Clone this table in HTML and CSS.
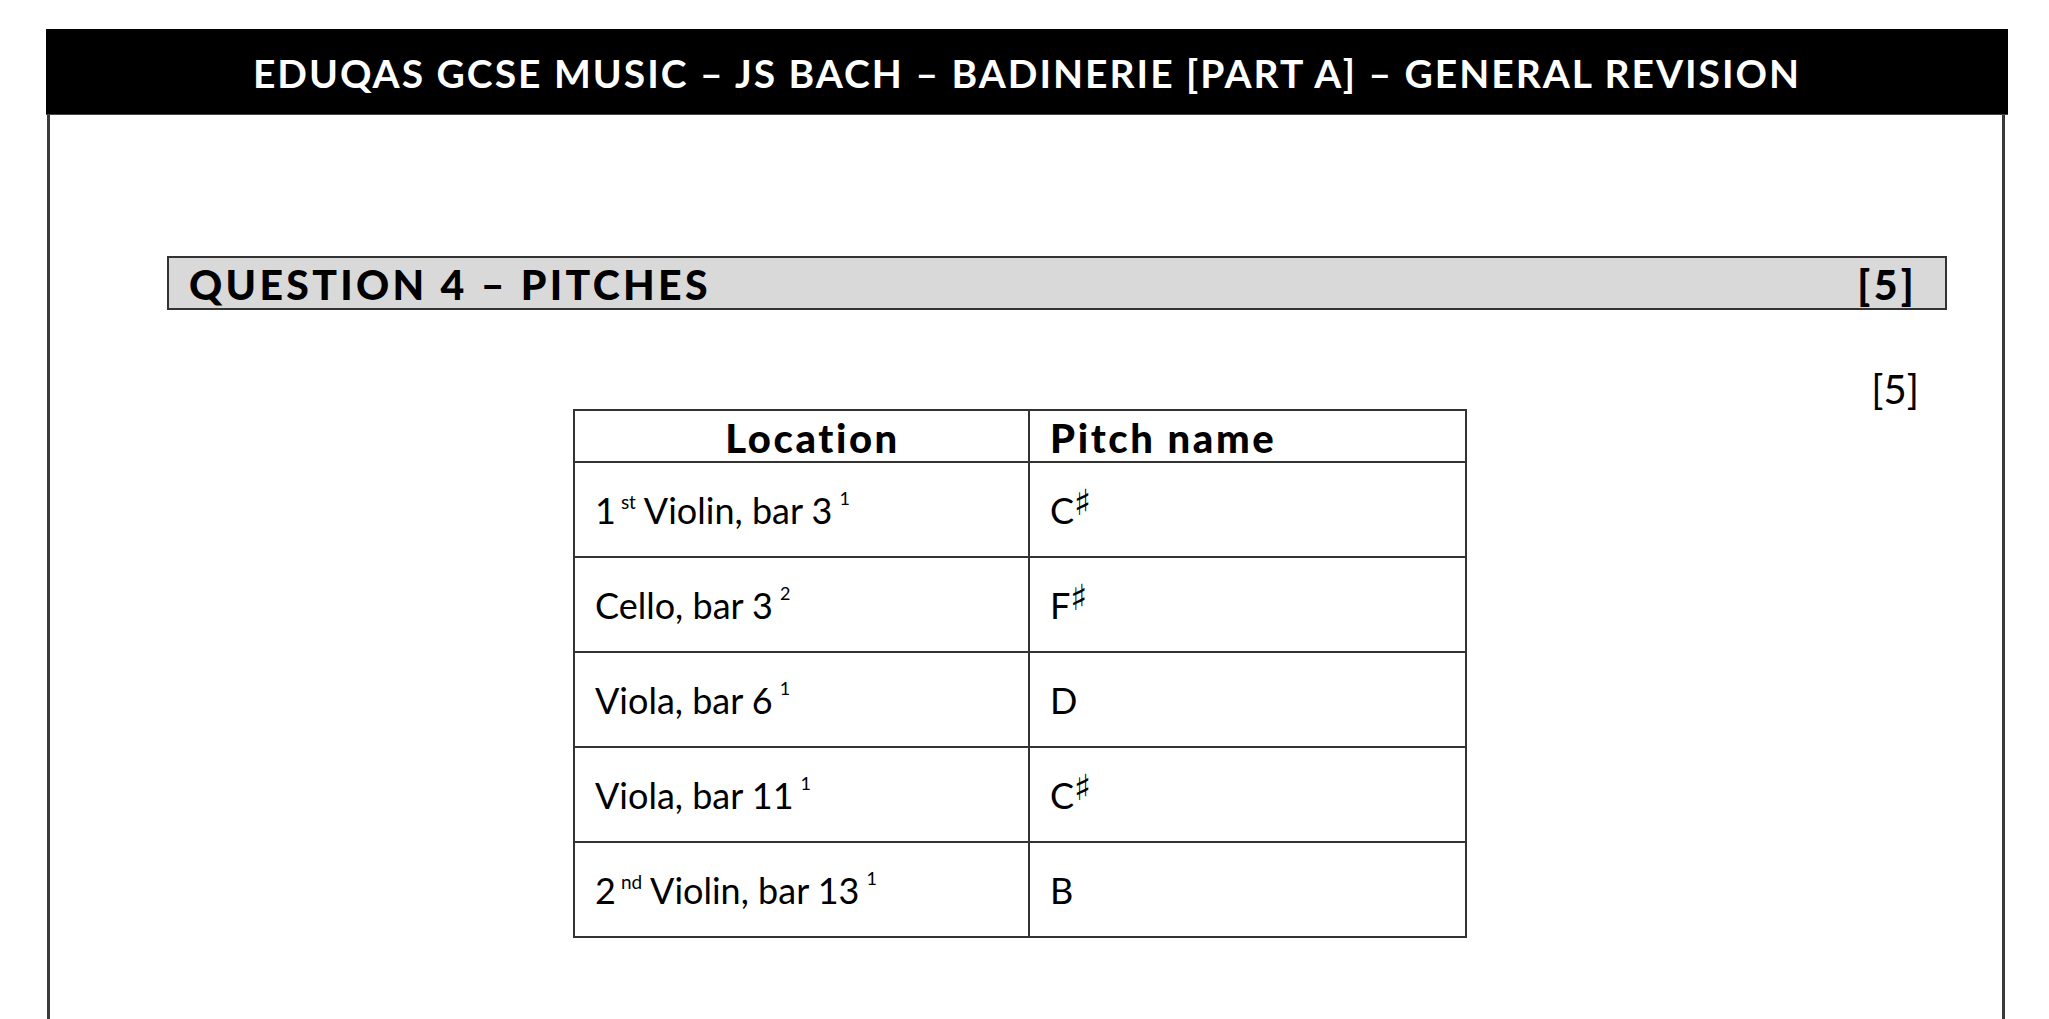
FILE: index.html
```html
<!DOCTYPE html>
<html lang="en">
<head>
<meta charset="utf-8">
<title>Eduqas GCSE Music – Badinerie – General Revision</title>
<link rel="stylesheet" href="styles.css">
</head>
<body>
<div class="page">
  <header class="banner">EDUQAS GCSE MUSIC – JS BACH – BADINERIE [PART A] – GENERAL REVISION</header>
  <main class="sheet">
    <section class="question">
      <div class="qbar">
        <span class="qtitle">QUESTION 4 – PITCHES</span>
        <span class="qmarks">[5]</span>
      </div>
      <div class="marks">[5]</div>
      <table class="pitches">
        <thead>
          <tr><th class="loc">Location</th><th class="pitch">Pitch name</th></tr>
        </thead>
        <tbody>
          <tr><td>1<sup class="ord">st</sup> Violin, bar 3<sup class="beat">1</sup></td><td>C<sup class="sharp">♯</sup></td></tr>
          <tr><td>Cello, bar 3<sup class="beat">2</sup></td><td>F<sup class="sharp">♯</sup></td></tr>
          <tr><td>Viola, bar 6<sup class="beat">1</sup></td><td>D</td></tr>
          <tr><td>Viola, bar 11<sup class="beat">1</sup></td><td>C<sup class="sharp">♯</sup></td></tr>
          <tr><td>2<sup class="ord">nd</sup> Violin, bar 13<sup class="beat">1</sup></td><td>B</td></tr>
        </tbody>
      </table>
    </section>
  </main>
</div>
</body>
</html>
```

FILE: styles.css
```css
html, body {
  margin: 0;
  padding: 0;
  background: #ffffff;
}

body {
  font-family: "Lato", "Liberation Sans", sans-serif;
  color: #000;
  overflow: hidden;
}

.page {
  margin: 29px 0 0 46px;
  width: 1962px;
}

.banner {
  background: #000;
  color: #fff;
  height: 86px;
  display: flex;
  align-items: center;
  justify-content: center;
  font-weight: 700;
  font-size: 39px;
  letter-spacing: 2px;
  border-bottom: 1px solid #444;
  padding-top: 2px;
  box-sizing: border-box;
}

.sheet {
  border-left: 3px solid #3a3a3a;
  border-right: 3px solid #3a3a3a;
  margin-left: 1px;
  width: 1958px;
  box-sizing: border-box;
  min-height: 910px;
  padding: 141px 55px 0 117px;
}

.question {
  display: flex;
  flex-direction: column;
}

.qbar {
  background: #d9d9d9;
  border: 2px solid #333;
  height: 54px;
  box-sizing: border-box;
  display: flex;
  align-items: center;
  justify-content: space-between;
  padding: 0 28px 0 20px;
  font-weight: 900;
  font-size: 41px;
  letter-spacing: 3.3px;
}

.qtitle, .qmarks {
  line-height: 1;
  padding-top: 2px;
}

.marks {
  align-self: flex-end;
  margin-right: 28px;
  margin-top: 59px;
  font-size: 40px;
  line-height: 41px;
  height: 41px;
  margin-bottom: -1px;
}

.pitches {
  margin-left: 406px;
  border-collapse: collapse;
  width: 894px;
  table-layout: fixed;
}

.pitches th, .pitches td {
  border: 2px solid #333;
  text-align: left;
  vertical-align: middle;
  padding: 0 0 0 20px;
  white-space: nowrap;
}

.pitches th {
  height: 52px;
  font-weight: 900;
  font-size: 40px;
  letter-spacing: 2.6px;
  line-height: 1;
  padding-top: 6px;
  vertical-align: bottom;
  padding-bottom: 3px;
  box-sizing: border-box;
}

.pitches th.loc {
  width: 455px;
  text-align: center;
  padding-left: 22px;
}

.pitches td {
  height: 95px;
  font-size: 36px;
  box-sizing: border-box;
}

sup {
  line-height: 0;
}

.ord {
  font-size: 19px;
  vertical-align: 15px;
  margin-left: 5px;
}

.beat {
  font-size: 18px;
  vertical-align: 19px;
  margin-left: 7px;
}

.sharp {
  font-family: "DejaVu Sans", sans-serif;
  font-size: 36px;
  vertical-align: 9px;
  margin-left: 0;
}
```
